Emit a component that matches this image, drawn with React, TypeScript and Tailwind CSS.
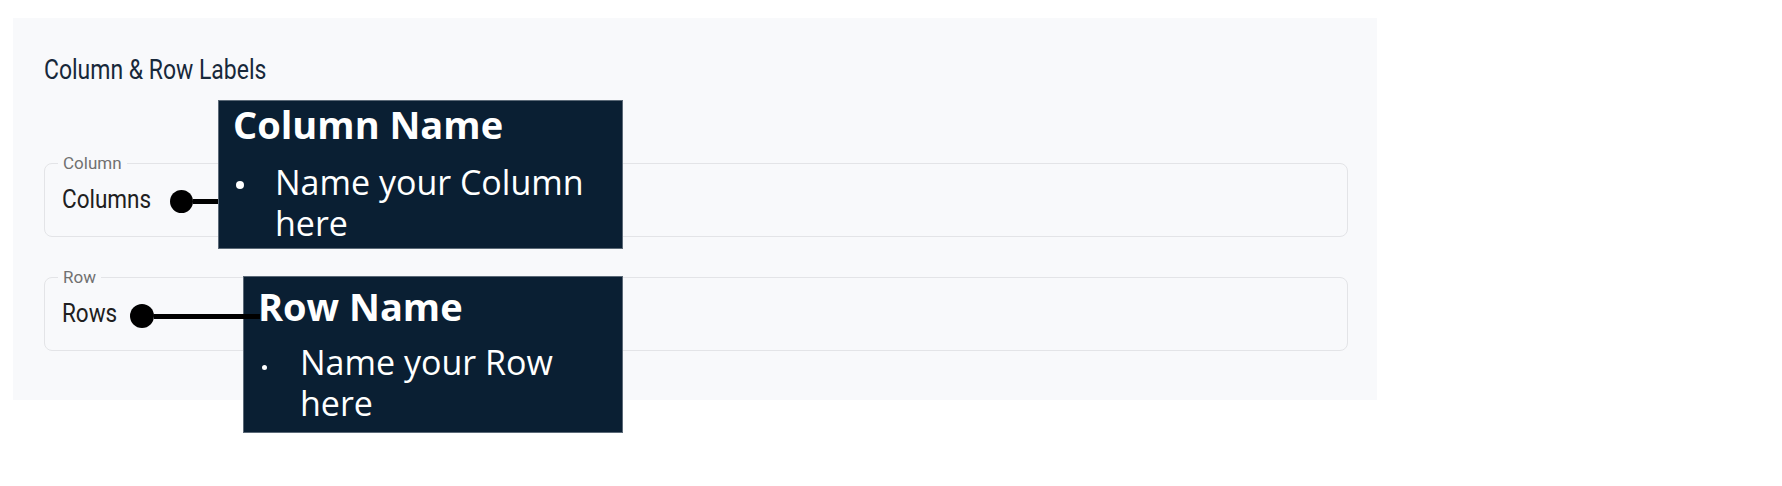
import React from "react";

const ui = "font-['Roboto',_'Liberation_Sans',_sans-serif]";
const tip = "font-['Open_Sans',_'Noto_Sans',_sans-serif]";

type FieldProps = { label: string; value: string };

const Field = ({ label, value }: FieldProps) => (
  <fieldset className="w-[1304px] rounded-[8px] border border-[#e3e4e7] px-[13px] pt-[12px] pb-[21px]">
    <legend className="px-[5px] text-[17px] leading-[20px] text-[#707070]">{label}</legend>
    <div className="pl-[4px] h-[30px]">
      <span className="inline-block origin-left scale-x-[0.9] text-[25px] leading-[30px] text-[#202020]">
        {value}
      </span>
    </div>
  </fieldset>
);

type NoteProps = {
  title: string;
  text: string;
  className: string;
  connector: string;
  line: string;
  box: string;
  listGap: string;
  bullet: string;
};

// dot + leader line + dark callout box
const Note = ({ title, text, className, connector, line, box, listGap, bullet }: NoteProps) => (
  <div className={`absolute flex items-start ${className}`}>
    <div className={`relative z-10 flex items-center ${connector}`}>
      <div className="shrink-0 rounded-full bg-black size-full max-w-[24px]"></div>
      <div className={`h-[5px] bg-black ${line}`}></div>
    </div>
    <div className={`bg-[#0a1f33] border border-[#5b6977] px-[14px] text-white ${tip} ${box}`}>
      <h3 className="text-[38px] leading-[41px] font-bold">{title}</h3>
      <ul className={listGap}>
        <li className="flex">
          <span className="w-[42px] shrink-0">
            <span className={`block rounded-full bg-white ${bullet}`}></span>
          </span>
          <span className="text-[34px] leading-[41px]">{text}</span>
        </li>
      </ul>
    </div>
  </div>
);

export default function App() {
  return (
    <div className={`w-full h-[486px] bg-white pl-[13px] pt-[18px] ${ui}`}>
      <div className="relative w-[1364px] h-[382px] bg-[#f8f9fb] px-[31px] pt-[36px]">
        <h2 className="h-[32px]">
          <span className="inline-block origin-left scale-x-[0.82] text-[28px] leading-[32px] text-[#17283a]">
            Column &amp; Row Labels
          </span>
        </h2>

        <div className="mt-[67px] flex flex-col gap-[30px]">
          <Field label="Column" value="Columns" />
          <Field label="Row" value="Rows" />
        </div>

        <Note
          title="Column Name"
          text="Name your Column here"
          className="left-[157px] top-[82px]"
          connector="mt-[90px] h-[23px] [&>div:first-child]:w-[23px] [&>div:first-child]:h-[23px]"
          line="w-[25px]"
          box="w-[405px] h-[149px] pt-[3px]"
          listGap="mt-[17px]"
          bullet="w-[8px] h-[8px] ml-[3px] mt-[19px]"
        />

        <Note
          title="Row Name"
          text="Name your Row here"
          className="left-[117px] top-[258px]"
          connector="mt-[28px] h-[24px] -mr-[17px] [&>div:first-child]:w-[24px] [&>div:first-child]:h-[24px]"
          line="w-[106px]"
          box="w-[380px] h-[157px] pt-[9px]"
          listGap="mt-[15px]"
          bullet="w-[5px] h-[5px] ml-[4px] mt-[23px]"
        />
      </div>
    </div>
  );
}
